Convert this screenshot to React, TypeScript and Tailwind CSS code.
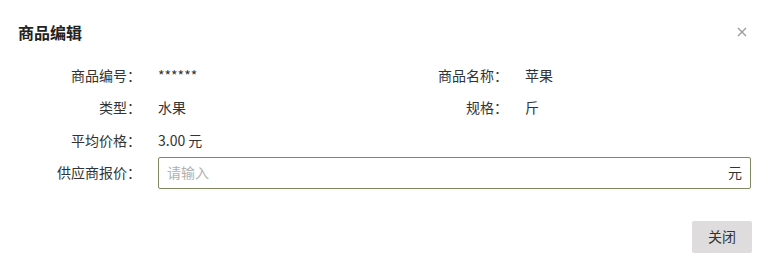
import React from 'react';

const fields = [
  { label: '商品编号：', value: '******' },
  { label: '商品名称：', value: '苹果' },
  { label: '类型：', value: '水果' },
  { label: '规格：', value: '斤' },
  { label: '平均价格：', value: '3.00 元' },
];

const App = () => {
  return (
    <div
      className="w-[768px] h-[265px] bg-white text-[#333] text-[14px]"
      style={{ fontFamily: '"Noto Sans CJK SC", "Noto Sans", sans-serif' }}
    >
      {/* Header */}
      <div className="flex items-center justify-between h-[64px] pl-[18px] pr-[21px]">
        <h2 className="text-[16px] font-bold text-[#222]">商品编辑</h2>
        <button className="text-[#999] leading-none">
          <svg width="10" height="10" viewBox="0 0 10 10" fill="none" stroke="currentColor" strokeWidth="1.3">
            <path d="M1 1L9 9M9 1L1 9" />
          </svg>
        </button>
      </div>

      {/* Form */}
      <div className="px-[17px] -mt-[5px]">
        <div className="grid grid-cols-2">
          {fields.map((f, i) => (
            <div key={i} className="flex items-center h-[32.5px]">
              <span className="w-[124px] text-right shrink-0">{f.label}</span>
              <span className="ml-[17px]">{f.value}</span>
            </div>
          ))}
        </div>
        <div className="flex items-center h-[32px]">
          <span className="w-[124px] text-right shrink-0">供应商报价：</span>
          <div className="ml-[17px] flex-1 flex items-center h-[32px] border border-[#7d8a60] rounded-[2px] pl-[8px] pr-[8px]">
            <input
              className="flex-1 outline-none bg-transparent placeholder:text-[#b0b0b0]"
              placeholder="请输入"
            />
            <span>元</span>
          </div>
        </div>
      </div>

      {/* Footer */}
      <div className="flex justify-end pr-[16px] mt-[32px]">
        <button className="w-[60px] h-[32px] bg-[#dedcdc] rounded-[2px] text-[14px] text-[#333]">关闭</button>
      </div>
    </div>
  );
};

export default App;
